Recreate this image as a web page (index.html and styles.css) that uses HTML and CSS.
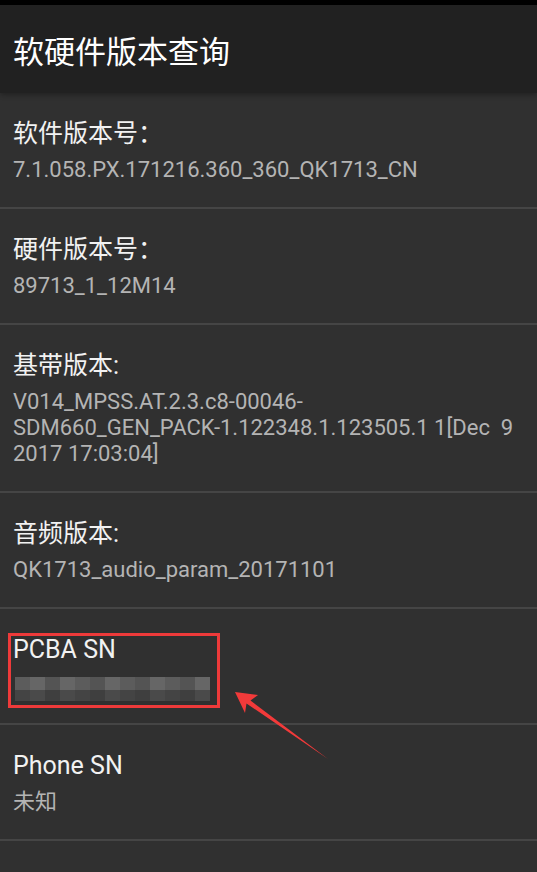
FILE: index.html
```html
<!DOCTYPE html>
<html lang="zh-CN">
<head>
    <meta charset="UTF-8">
    <meta name="viewport" content="width=device-width, initial-scale=1.0">
    <title>软硬件版本查询</title>
    <link rel="stylesheet" href="styles.css">
</head>
<body>

    <div class="status-strip"></div>

    <header class="app-bar">
        <h1>软硬件版本查询</h1>
    </header>

    <main class="info-list">
        <div class="info-row">
            <div class="info-label">软件版本号：</div>
            <div class="info-value">7.1.058.PX.171216.360_360_QK1713_CN</div>
        </div>

        <div class="info-row">
            <div class="info-label">硬件版本号：</div>
            <div class="info-value">89713_1_12M14</div>
        </div>

        <div class="info-row">
            <div class="info-label">基带版本:</div>
            <div class="info-value">V014_MPSS.AT.2.3.c8-00046-<br>SDM660_GEN_PACK-1.122348.1.123505.1 1[Dec&nbsp; 9<br>2017 17:03:04]</div>
        </div>

        <div class="info-row">
            <div class="info-label">音频版本:</div>
            <div class="info-value">QK1713_audio_param_20171101</div>
        </div>

        <div class="info-row">
            <div class="info-label">PCBA SN</div>
            <div class="info-value">
                <!-- pixelated (hidden) serial number -->
                <div class="mosaic">
                    <span class="m1"></span><span class="m2"></span><span class="m3"></span><span class="m2"></span>
                    <span class="m1"></span><span class="m3"></span><span class="m2"></span><span class="m1"></span>
                    <span class="m3"></span><span class="m2"></span><span class="m1"></span><span class="m3"></span>
                    <span class="m2"></span>
                </div>
            </div>
        </div>

        <div class="info-row">
            <div class="info-label">Phone SN</div>
            <div class="info-value">未知</div>
        </div>
    </main>

    <!-- Annotation: red box + arrow -->
    <div class="mark-box"></div>
    <svg class="mark-arrow" width="120" height="90" viewBox="0 0 120 90">
        <polygon points="2,4 25,7 17.5,12.5 95,71 13.5,15.5 12,25" fill="#f23a3a"/>
    </svg>

</body>
</html>
```

FILE: styles.css
```css
/* General */
body {
    margin: 0;
    background-color: #303030;
    font-family: Roboto, "Noto Sans CJK SC", sans-serif;
    position: relative;
    min-height: 872px;
}

.status-strip {
    height: 5px;
    background-color: #000;
}

/* App bar */
.app-bar {
    background-color: #212121;
    height: 88px;
    display: flex;
    align-items: center;
    padding: 0 13px;
    box-shadow: 0 2px 5px rgba(0, 0, 0, 0.3);
    position: relative;
}

.app-bar h1 {
    margin: 0;
    font-size: 31px;
    font-weight: normal;
    color: #ffffff;
}

/* Info rows */
.info-row {
    padding: 26px 13px 24px;
    border-bottom: 2px solid #454545;
}

.info-label {
    font-size: 25px;
    line-height: 30px;
    color: #f2f2f2;
    margin-bottom: 8px;
}

.info-value {
    font-size: 22px;
    line-height: 26px;
    color: #b4b4b4;
    white-space: nowrap;
    min-height: 26px;
}

/* Mosaic over the serial number */
.mosaic {
    display: flex;
    padding: 4px 0 0 2px;
    height: 22px;
}

.mosaic span {
    width: 15px;
    height: 24px;
}

.m1 {
    background: linear-gradient(#5c5c5c 0, #5c5c5c 55%, #444 55%, #444 100%);
}

.m2 {
    background: linear-gradient(#666 0, #666 55%, #4a4a4a 55%, #4a4a4a 100%);
}

.m3 {
    background: linear-gradient(#545454 0, #545454 55%, #3f3f3f 55%, #3f3f3f 100%);
}

/* Annotation */
.mark-box {
    position: absolute;
    left: 8px;
    top: 633px;
    width: 206px;
    height: 69px;
    border: 3px solid #ee3a3a;
}

.mark-arrow {
    position: absolute;
    left: 233px;
    top: 688px;
}
```
